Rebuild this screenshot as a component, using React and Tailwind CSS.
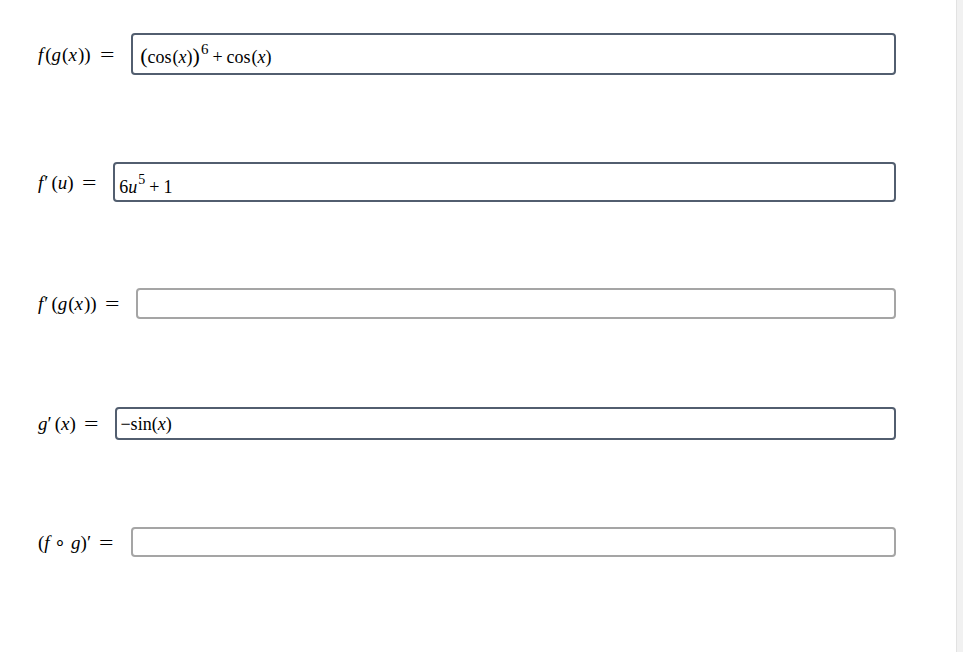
import React from 'react';

const I = ({ children }) => <span className="italic">{children}</span>;

const Eq = () => <span className="inline-block ml-[10px] scale-x-[1.35]">=</span>;

const Row = ({ label, children, filled, className, boxClass }) => (
  <div className={`flex items-center ${className}`}>
    <div className="text-[19px] text-black whitespace-nowrap pr-[19px] leading-none">{label}</div>
    <div
      className={`flex-1 flex items-center rounded-[4px] border-2 bg-white text-[18px] text-black ${
        filled ? 'border-[#525e6f]' : 'border-[#a5a5a5]'
      } ${boxClass}`}
    >
      {children}
    </div>
  </div>
);

const App = () => {
  return (
    <div className="w-[963px] h-[652px] flex bg-white overflow-hidden font-['Liberation_Serif',serif]">
      <div className="flex-1 flex flex-col pl-[38px] pr-[60px] pt-[33px]">
        {/* f(g(x)) */}
        <Row
          filled
          className="h-[42px]"
          boxClass="h-[42px] pl-[7px] pt-[7px]"
          label={
            <span>
              <I>f</I>
              <span className="ml-[2px]">(</span>
              <I>g</I>
              <span className="ml-[1px]">(</span>
              <I>x</I>
              <span className="ml-[1px]">))</span>
              <span className="ml-[1px]" />
              <Eq />
            </span>
          }
        >
          <span className="flex items-baseline">
            <span className="text-[22px] leading-none">(</span>
            <span>cos</span>
            <span className="ml-[1px]">(</span>
            <I>x</I>
            <span>)</span>
            <span className="text-[22px] leading-none">)</span>
            <span className="relative -top-[9px] text-[15px] ml-[1px]">6</span>
            <span className="mx-[4px]">+</span>
            <span>cos</span>
            <span className="ml-[1px]">(</span>
            <I>x</I>
            <span>)</span>
          </span>
        </Row>

        {/* f'(u) */}
        <Row
          filled
          className="mt-[87px] h-[40px]"
          boxClass="h-[40px] pl-[4px] pt-[10px]"
          label={
            <span>
              <I>f</I>
              <span className="ml-[1px] mr-[3px]">′</span>(<I>u</I>)<Eq />
            </span>
          }
        >
          <span className="flex items-baseline">
            <span>6</span>
            <I>u</I>
            <span className="relative -top-[9px] text-[14px] ml-[1px]">5</span>
            <span className="mx-[4px]">+</span>
            <span>1</span>
          </span>
        </Row>

        {/* f'(g(x)) */}
        <Row
          className="mt-[86px] h-[31px]"
          boxClass="h-[31px]"
          label={
            <span>
              <I>f</I>
              <span className="ml-[1px] mr-[3px]">′</span>(<I>g</I>
              <span className="ml-[1px]">(</span>
              <I>x</I>
              <span className="ml-[1px]">))</span>
              <Eq />
            </span>
          }
        />

        {/* g'(x) */}
        <Row
          filled
          className="mt-[88px] h-[33px]"
          boxClass="h-[33px] pl-[3px] pt-[1px]"
          label={
            <span>
              <I>g</I>
              <span className="mr-[3px]">′</span>(<I>x</I>)<Eq />
            </span>
          }
        >
          <span className="flex items-baseline">
            <span>−sin</span>
            <span>(</span>
            <I>x</I>
            <span>)</span>
          </span>
        </Row>

        {/* (f∘g)' */}
        <Row
          className="mt-[87px] h-[30px]"
          boxClass="h-[30px]"
          label={
            <span>
              (<I>f</I> ∘ <I>g</I>)′<Eq />
            </span>
          }
        />
      </div>
      <div className="w-[7px] h-full bg-[#f1f1f1] border-l border-[#e2e2e2]" />
    </div>
  );
};

export default App;
